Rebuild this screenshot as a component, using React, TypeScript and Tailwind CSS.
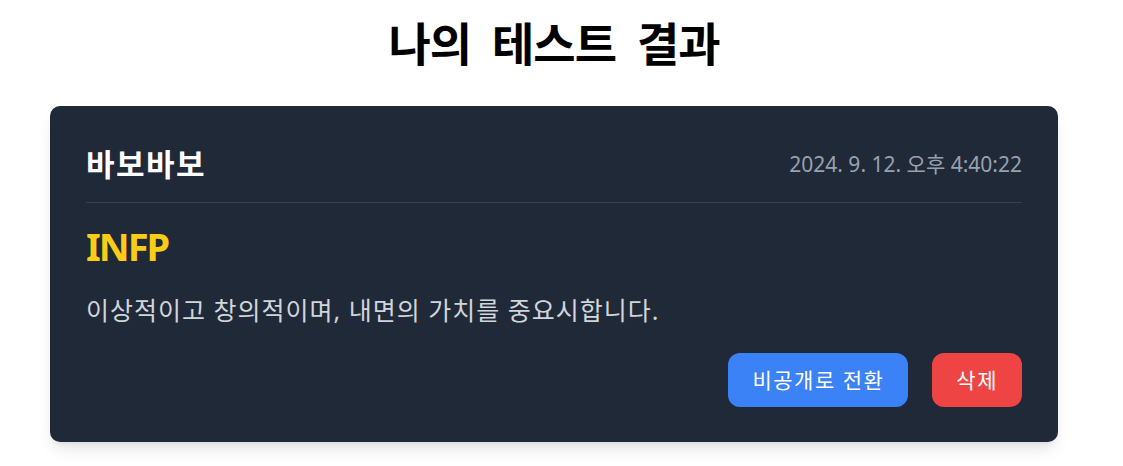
export default function App() {
  return (
    <div className="min-h-screen bg-white font-['Noto_Sans','Noto_Sans_CJK_KR',sans-serif]">
      <div className="w-[1108px] px-[50px] pt-[15px]">
        <h1 className="text-center text-[46px] leading-[56px] font-bold text-black tracking-[-1px] [word-spacing:10px] mb-[35px]">
          나의 테스트 결과
        </h1>

        {/* Result card */}
        <div className="bg-[#1f2937] rounded-[10px] shadow-lg px-9 pt-10 pb-[35px]">
          <div className="flex items-center justify-between pb-5 border-b border-gray-700">
            <h2 className="text-[31px] leading-9 font-bold text-white tracking-[1.5px]">바보바보</h2>
            <span className="text-[21px] leading-7 text-gray-400">2024. 9. 12. 오후 4:40:22</span>
          </div>

          <div className="mt-[19px] text-[38px] leading-[48px] font-bold text-[#facc15] tracking-[-2px]">INFP</div>
          <p className="mt-6 text-[25px] leading-8 text-gray-300 tracking-[1px]">
            이상적이고 창의적이며, 내면의 가치를 중요시합니다.
          </p>

          <div className="mt-[27px] flex justify-end gap-6">
            <button className="bg-[#3b82f6] text-white text-[21px] leading-[30px] tracking-[1.5px] px-6 py-3 rounded-xl">
              비공개로 전환
            </button>
            <button className="bg-[#ef4444] text-white text-[21px] leading-[30px] tracking-[1.5px] px-6 py-3 rounded-xl">
              삭제
            </button>
          </div>
        </div>
      </div>
    </div>
  )
}
